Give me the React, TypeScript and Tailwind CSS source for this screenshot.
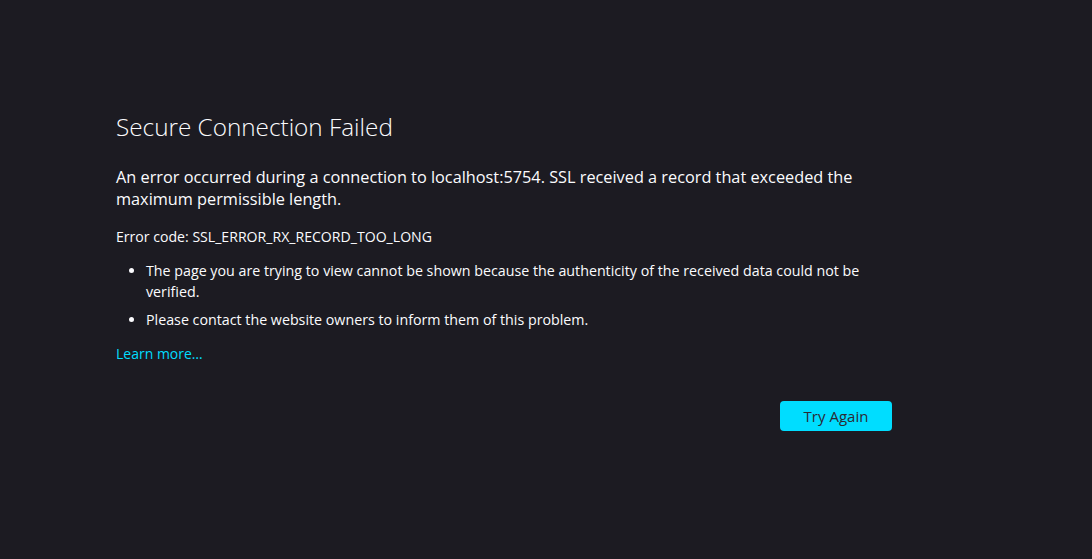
import React from 'react';

const FONT = { fontFamily: '"Open Sans", "Noto Sans", sans-serif' };

export default function App() {
    return (
        <div className="min-h-screen w-full bg-[#1c1b22] text-[#fbfbfe]" style={FONT}>
            <div className="ml-[116px] w-[776px] pt-[111px]">
                {/* Title */}
                <h1 className="text-[24.3px] leading-[32px] font-light">Secure Connection Failed</h1>

                {/* Short description */}
                <p className="mt-[23px] text-[16.3px] leading-[22px]">
                    An error occurred during a connection to localhost:5754. SSL received a record that exceeded the
                    maximum permissible length.
                </p>

                <p className="mt-[16px] text-[14.1px] leading-[21px]">Error code: SSL_ERROR_RX_RECORD_TOO_LONG</p>

                <ul className="mt-[13px] ml-[30px] list-disc text-[14.25px] leading-[21px] flex flex-col gap-[7px]">
                    <li>
                        The page you are trying to view cannot be shown because the authenticity of the received data
                        could not be verified.
                    </li>
                    <li>Please contact the website owners to inform them of this problem.</li>
                </ul>

                <a href="#" className="mt-[13px] block text-[14px] leading-[21px] text-[#00ddff]">
                    Learn more…
                </a>

                <div className="mt-[37px] flex justify-end">
                    <button className="h-[30px] w-[112px] rounded-[4px] bg-[#00ddff] text-[15px] text-[#2b2a33]">
                        Try Again
                    </button>
                </div>
            </div>
        </div>
    );
}
